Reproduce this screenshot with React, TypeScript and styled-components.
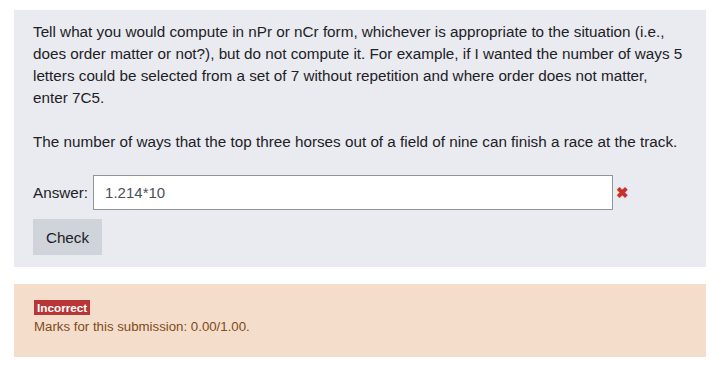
import React from 'react';
import styled, { createGlobalStyle } from 'styled-components';

const GlobalStyle = createGlobalStyle`
  body {
    margin: 0;
    background: #fff;
    font-family: "Liberation Sans", Arial, sans-serif;
    color: #1d2125;
  }
`;

const Page = styled.div`
  padding: 10px 16px 0 14px;
  display: flex;
  flex-direction: column;
  gap: 17px;
`;

const QuestionBox = styled.div`
  background-color: #e9ebf0;
  padding: 11px 21.5px 12px 19px;
`;

const Para = styled.p<{ $last?: boolean }>`
  margin: 0 0 ${p => (p.$last ? 0 : 22)}px 0;
  font-size: 15.25px;
  line-height: 22px;
`;

const AnswerRow = styled.div`
  display: flex;
  align-items: center;
  gap: 5px;
  margin-top: 22px;
`;

const Label = styled.label`
  font-size: 15.25px;
`;

const AnswerInput = styled.input`
  width: 520px;
  height: 35px;
  box-sizing: border-box;
  border: 1px solid #8f959e;
  padding: 0 11px;
  font-family: "Liberation Sans", Arial, sans-serif;
  font-size: 15px;
  color: #495057;
  background: #fff;
  outline: none;
`;

const Wrong = styled.span`
  color: #c9302c;
  font-size: 15px;
  font-weight: bold;
  margin-left: -2px;
`;

const CheckButton = styled.button`
  margin-top: 9px;
  width: 69px;
  height: 36px;
  border: none;
  background-color: #ced4da;
  color: #1d2125;
  font-family: "Liberation Sans", Arial, sans-serif;
  font-size: 15.25px;
  cursor: pointer;
`;

const Feedback = styled.div`
  background-color: #f5ddcb;
  padding: 16px 20px 20px 20px;
  color: #7d4a1a;
  display: flex;
  flex-direction: column;
  align-items: flex-start;
`;

const Badge = styled.span`
  display: inline-block;
  background-color: #b93636;
  color: #fff;
  font-size: 11.75px;
  font-weight: bold;
  padding: 1px 3px;
  line-height: 13px;
`;

const Marks = styled.div`
  margin-top: 2px;
  font-size: 13.25px;
  line-height: 20px;
`;

export default function App() {
  return (
    <>
      <GlobalStyle />
      <Page>
        <QuestionBox>
          <Para>
            Tell what you would compute in nPr or nCr form, whichever is appropriate to the situation (i.e., does order matter or not?), but do not compute it. For example, if I wanted the number of ways 5 letters could be selected from a set of 7 without repetition and where order does not matter, enter 7C5.
          </Para>
          <Para $last>
            The number of ways that the top three horses out of a field of nine can finish a race at the track.
          </Para>
          <AnswerRow>
            <Label>Answer:</Label>
            <AnswerInput defaultValue="1.214*10" />
            <Wrong>✖</Wrong>
          </AnswerRow>
          <CheckButton>Check</CheckButton>
        </QuestionBox>
        <Feedback>
          <Badge>Incorrect</Badge>
          <Marks>Marks for this submission: 0.00/1.00.</Marks>
        </Feedback>
      </Page>
    </>
  );
}
